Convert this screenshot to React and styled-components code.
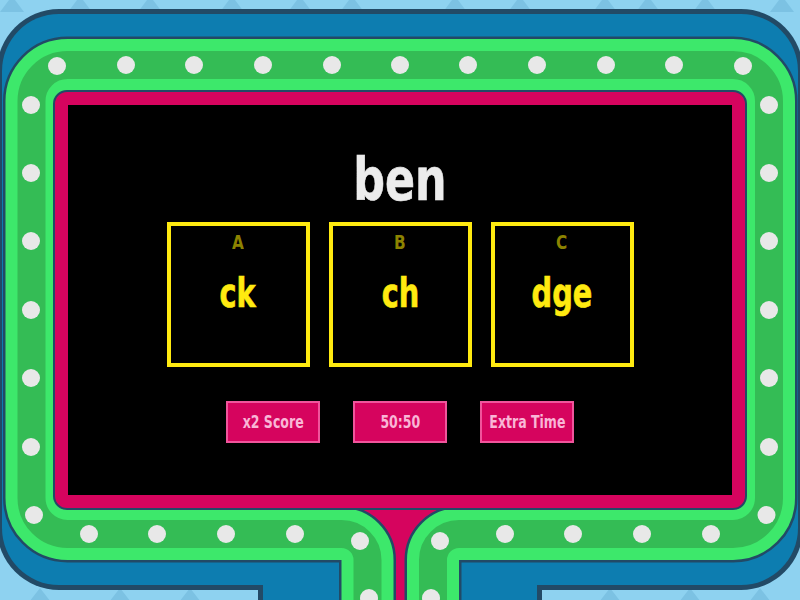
import React from "react";
import styled, { createGlobalStyle } from "styled-components";

const FONT = `"DejaVu Sans Condensed", "DejaVu Sans", sans-serif`;

const C = {
  sky: "#8ed2f0",
  skyDark: "#7cc2e3",
  navy: "#224a66",
  blue: "#0d7db0",
  green: "#3de86b",
  greenDark: "#34bc55",
  dot: "#e8e8e8",
  magenta: "#d6045e",
  yellow: "#ffea10",
  olive: "#8c8300",
  pinkBorder: "#f0559c",
  pinkText: "#f9b6d6",
};

const Global = createGlobalStyle`
  html, body { margin: 0; padding: 0; background: ${C.sky}; overflow: hidden; }
  #root { width: 800px; height: 600px; }
`;

const Stage = styled.div`
  position: relative;
  width: 800px;
  height: 600px;
  overflow: hidden;
  box-sizing: border-box;
  padding: 90px 53px 0 53px;
  font-family: ${FONT};
`;

const Backdrop = styled.svg`
  position: absolute;
  inset: 0;
  z-index: 0;
`;

const Bezel = styled.div`
  position: relative;
  z-index: 1;
  width: 694px;
  height: 420px;
  box-sizing: border-box;
  background: ${C.magenta};
  border: 2px solid ${C.navy};
  border-radius: 14px;
  padding: 13px;
`;

const Screen = styled.div`
  width: 100%;
  height: 100%;
  background: #000;
  display: flex;
  flex-direction: column;
  align-items: center;
  padding-top: 45px;
  box-sizing: border-box;
`;

const Question = styled.div`
  font-size: 58px;
  line-height: 60px;
  font-weight: 700;
  color: #ececec;
  transform: scaleX(0.85);
  -webkit-text-stroke: 0.6px #ececec;
`;

const Answers = styled.div`
  display: flex;
  gap: 19px;
  margin-top: 12px;
`;

const AnswerBox = styled.div`
  width: 143px;
  height: 145px;
  box-sizing: border-box;
  border: 4px solid ${C.yellow};
  display: flex;
  flex-direction: column;
  align-items: center;
  padding-top: 6px;
`;

const Label = styled.div`
  font-size: 20px;
  line-height: 20px;
  font-weight: 700;
  color: ${C.olive};
  transform: scaleX(0.85);
`;

const AnswerText = styled.div`
  margin-top: 20px;
  font-size: 40px;
  line-height: 42px;
  font-weight: 700;
  color: ${C.yellow};
  transform: scaleX(0.8);
  -webkit-text-stroke: 0.6px ${C.yellow};
`;

const PowerUps = styled.div`
  display: flex;
  gap: 33px;
  margin-top: 34px;
`;

const PowerUp = styled.div`
  width: 94px;
  height: 42px;
  box-sizing: border-box;
  background: ${C.magenta};
  border: 2px solid ${C.pinkBorder};
  display: flex;
  align-items: center;
  justify-content: center;
  white-space: nowrap;
`;

const PowerUpText = styled.span`
  display: inline-block;
  font-size: 17px;
  font-weight: 700;
  color: ${C.pinkText};
  transform: scaleX(0.82);
`;

const FRAME_PATH =
  "M 367.5 620 L 367.5 560 A 26 26 0 0 0 341.5 534 L 67.5 534 A 36 36 0 0 1 31.5 498 L 31.5 101 A 36 36 0 0 1 67.5 65 L 733 65 A 36 36 0 0 1 769 101 L 769 498 A 36 36 0 0 1 733 534 L 459 534 A 26 26 0 0 0 433 560 L 433 620";

const DOTS = [
  [57, 66], [126, 65], [194, 65], [263, 65], [332, 65], [400, 65], [468, 65], [537, 65], [606, 65], [674, 65], [743, 66],
  [31, 105], [31, 173], [31, 241], [31, 310], [31, 378], [31, 447], [34, 515],
  [769, 105], [769, 173], [769, 241], [769, 310], [769, 378], [769, 447], [766.5, 515],
  [89, 534], [157, 534], [226, 534], [295, 534], [360, 541], [369, 598],
  [440, 541], [431, 598], [505, 534], [573, 534], [642, 534], [711, 534],
];

const TRIS = [12, 80, 150, 232, 300, 352, 455, 520, 605, 648, 705, 782];

function Frame() {
  return (
    <Backdrop width="800" height="600" viewBox="0 0 800 600">
      {TRIS.map((x, i) => (
        <polygon key={"t" + i} points={`${x - 12},12 ${x},-4 ${x + 12},12`} fill={C.skyDark} />
      ))}
      {[40, 120, 190, 610, 690, 760].map((x, i) => (
        <polygon key={"b" + i} points={`${x - 14},606 ${x},588 ${x + 14},606`} fill={C.skyDark} />
      ))}
      <rect x="-3" y="9" width="806" height="581" rx="62" fill={C.navy} />
      <rect x="258" y="560" width="284" height="50" fill={C.navy} />
      <rect x="2" y="14" width="796" height="571" rx="57" fill={C.blue} />
      <rect x="263" y="555" width="274" height="55" fill={C.blue} />
      <rect x="346" y="495" width="108" height="115" fill={C.magenta} />
      <path d={FRAME_PATH} fill="none" stroke={C.navy} strokeWidth="57" />
      <path d={FRAME_PATH} fill="none" stroke={C.green} strokeWidth="52" />
      <path d={FRAME_PATH} fill="none" stroke={C.greenDark} strokeWidth="28" />
      {DOTS.map(([x, y], i) => (
        <circle key={"d" + i} cx={x} cy={y} r="9" fill={C.dot} />
      ))}
    </Backdrop>
  );
}

const answers = [
  { label: "A", text: "ck" },
  { label: "B", text: "ch" },
  { label: "C", text: "dge" },
];

const powerUps = ["x2 Score", "50:50", "Extra Time"];

export default function App() {
  return (
    <>
      <Global />
      <Stage>
        <Frame />
        <Bezel>
          <Screen>
            <Question>ben</Question>
            <Answers>
              {answers.map((a) => (
                <AnswerBox key={a.label}>
                  <Label>{a.label}</Label>
                  <AnswerText>{a.text}</AnswerText>
                </AnswerBox>
              ))}
            </Answers>
            <PowerUps>
              {powerUps.map((p) => (
                <PowerUp key={p}>
                  <PowerUpText>{p}</PowerUpText>
                </PowerUp>
              ))}
            </PowerUps>
          </Screen>
        </Bezel>
      </Stage>
    </>
  );
}
